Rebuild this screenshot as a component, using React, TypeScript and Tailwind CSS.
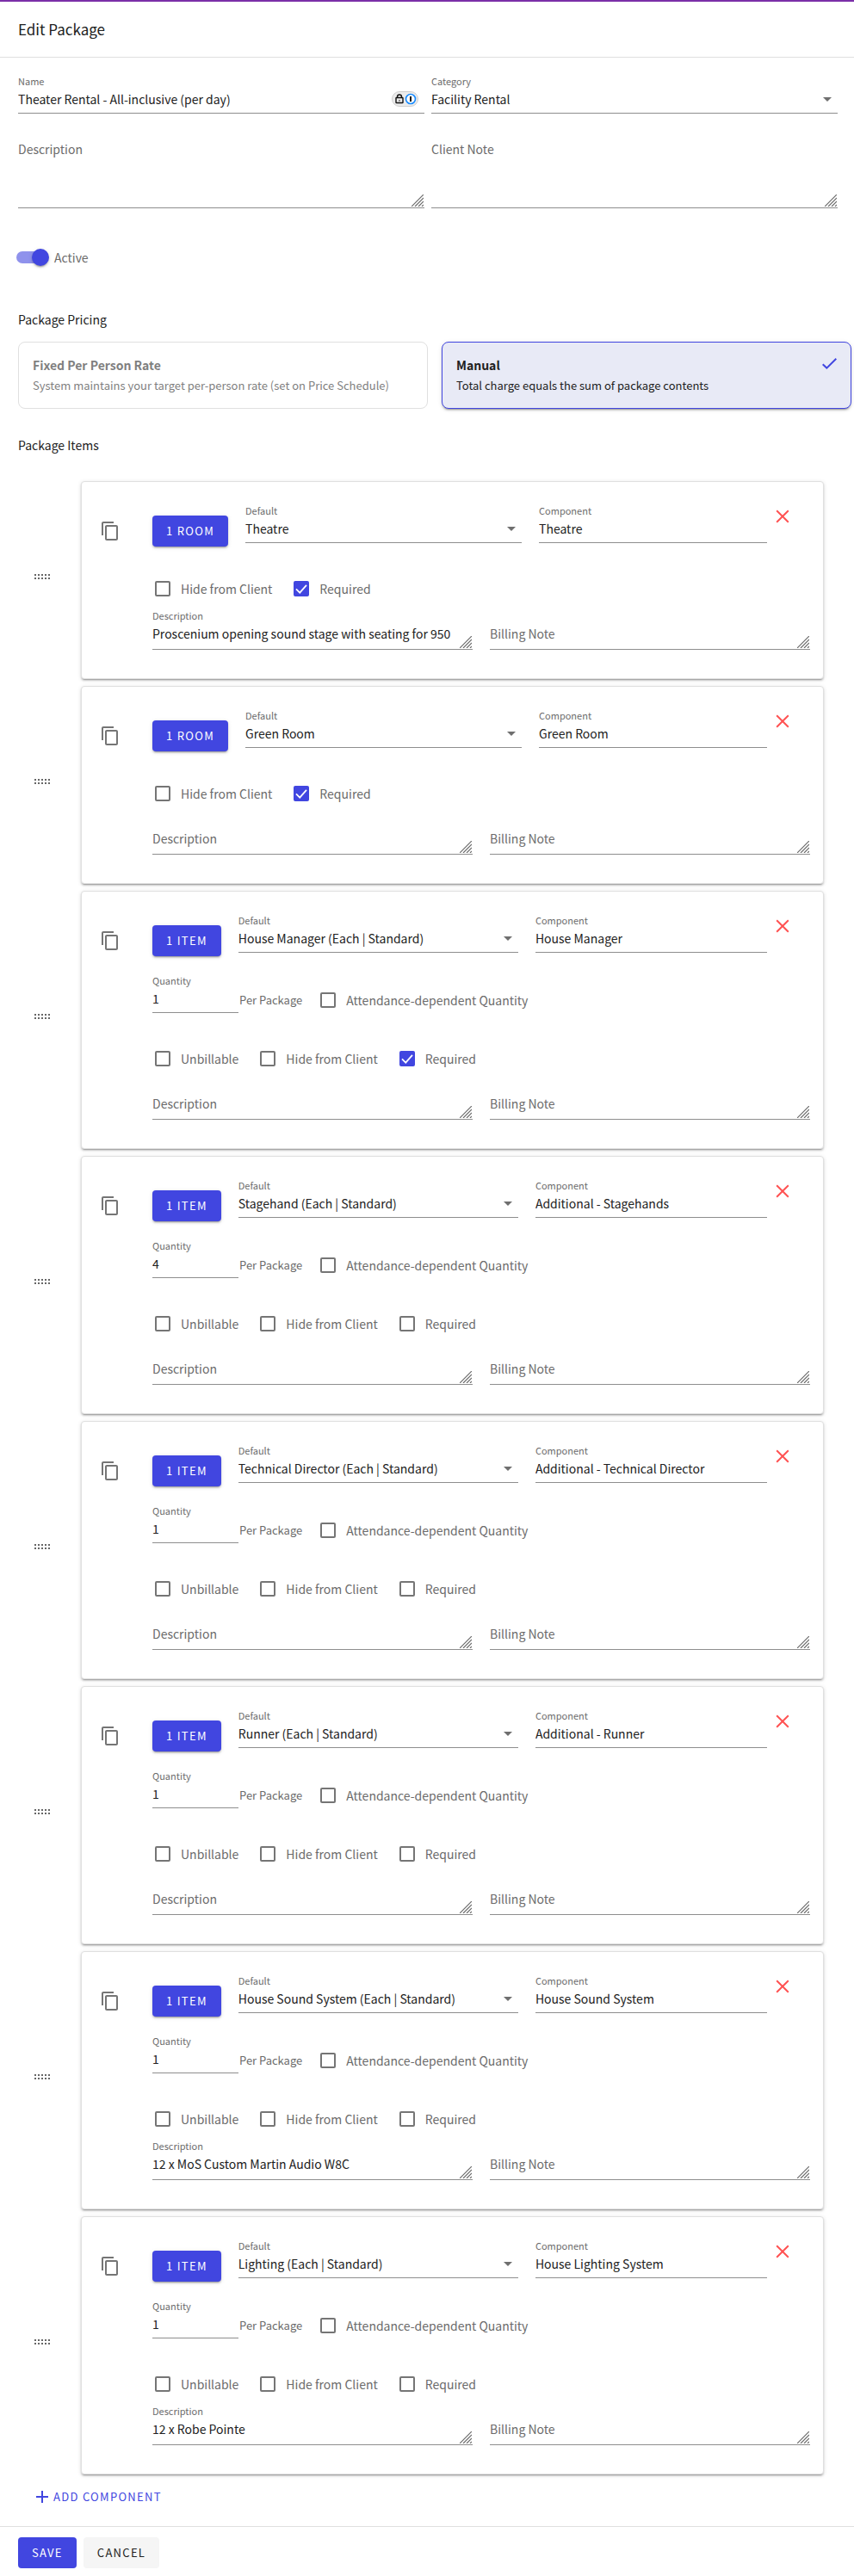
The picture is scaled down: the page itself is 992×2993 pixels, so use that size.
import { useId, type ReactNode } from "react";

type Item = {
  kind: "room" | "item";
  choice: string;
  component: string;
  quantity?: string;
  required?: boolean;
  description?: string;
};

const items: Item[] = [
  {
    kind: "room",
    choice: "Theatre",
    component: "Theatre",
    required: true,
    description: "Proscenium opening sound stage with seating for 950",
  },
  { kind: "room", choice: "Green Room", component: "Green Room", required: true },
  { kind: "item", choice: "House Manager (Each | Standard)", component: "House Manager", quantity: "1", required: true },
  { kind: "item", choice: "Stagehand (Each | Standard)", component: "Additional - Stagehands", quantity: "4" },
  { kind: "item", choice: "Technical Director (Each | Standard)", component: "Additional - Technical Director", quantity: "1" },
  { kind: "item", choice: "Runner (Each | Standard)", component: "Additional - Runner", quantity: "1" },
  {
    kind: "item",
    choice: "House Sound System (Each | Standard)",
    component: "House Sound System",
    quantity: "1",
    description: "12 x MoS Custom Martin Audio W8C",
  },
  {
    kind: "item",
    choice: "Lighting (Each | Standard)",
    component: "House Lighting System",
    quantity: "1",
    description: "12 x Robe Pointe",
  },
];

const smallLabel = "block h-4 text-[11px] leading-[15px] text-[#6b6b6b]";
const control =
  "block h-[29px] w-full min-w-0 appearance-none rounded-none border-b border-[#8e8e8e] bg-transparent p-0 pb-1 text-[14px] text-[#212121] outline-none focus:border-[#4146e0]";

function TextField({ label, value, children }: { label: string; value: string; children?: ReactNode }) {
  const id = useId();
  return (
    <div className="min-w-0">
      <label htmlFor={id} className={smallLabel}>
        {label}
      </label>
      <div className="relative">
        <input id={id} type="text" defaultValue={value} className={control} />
        {children}
      </div>
    </div>
  );
}

function SelectField({ label, value }: { label: string; value: string }) {
  const id = useId();
  return (
    <div className="min-w-0">
      <label htmlFor={id} className={smallLabel}>
        {label}
      </label>
      <div className="relative">
        <select id={id} defaultValue={value} className={control}>
          <option>{value}</option>
        </select>
        <svg viewBox="0 0 10 5" className="pointer-events-none absolute top-[10px] right-[7px] h-[5px] w-[10px]" aria-hidden="true">
          <path d="M0 0h10L5 5z" fill="#6f6f6f" />
        </svg>
      </div>
    </div>
  );
}

function AreaField({ label, value, tall }: { label: string; value?: string; tall?: boolean }) {
  const id = useId();
  const floating = value
    ? "top-0 text-[11px] leading-[15px] text-[#6b6b6b]"
    : "top-4 text-[14px] leading-6 text-[#6b6b6b]";
  return (
    <div className="relative min-w-0 pt-4">
      <label htmlFor={id} className={`pointer-events-none absolute left-0 ${floating}`}>
        {label}
      </label>
      <textarea
        id={id}
        rows={1}
        defaultValue={value}
        className={`block w-full resize-none overflow-hidden rounded-none border-b border-[#8e8e8e] bg-transparent pr-3 text-[14px] leading-6 text-[#212121] outline-none focus:border-[#4146e0] ${
          tall ? "h-[81px]" : "h-[31px]"
        }`}
      />
      <svg viewBox="0 0 14 14" className="pointer-events-none absolute right-px bottom-[2px] size-[14px]" aria-hidden="true">
        <path d="M0 14L14 0M4 14L14 4M8 14l6-6M12 14l2-2" stroke="#6b6b6b" strokeWidth="1.200" />
      </svg>
    </div>
  );
}

function Check({ label, checked }: { label: string; checked?: boolean }) {
  return (
    <label className="flex h-6 items-center gap-3 pl-[3px] text-[14px] leading-6 text-[#6b6b6b]">
      <span className="relative block size-[18px]">
        <input
          type="checkbox"
          defaultChecked={checked}
          className="peer block size-[18px] appearance-none rounded-[2px] border-2 border-[#757575] bg-white checked:border-[#4146e0] checked:bg-[#4146e0]"
        />
        <svg
          viewBox="0 0 24 24"
          className="pointer-events-none absolute inset-0 hidden size-[18px] p-[2px] peer-checked:block"
          aria-hidden="true"
        >
          <path d="M1.700 12.700L9 20 22.300 5" fill="none" stroke="#fff" strokeWidth="3" />
        </svg>
      </span>
      {label}
    </label>
  );
}

function DragHandle() {
  return (
    <button type="button" aria-label="Reorder" className="cursor-grab">
      <svg viewBox="0 0 18 6" className="block h-[6px] w-[18px]" shapeRendering="crispEdges" aria-hidden="true">
        {[0, 4, 8, 12, 16].map((x) => (
          <path key={x} d={`M${x} 0h2v2h-2zM${x} 4h2v2h-2z`} fill="#666" />
        ))}
      </svg>
    </button>
  );
}

function PackageItem({ item }: { item: Item }) {
  const isItem = item.kind === "item";
  return (
    <li className="flex items-center pt-2">
      <div className="flex w-[73px] shrink-0 justify-center pr-[17px] pb-2">
        <DragHandle />
      </div>
      <article className="flex min-w-0 flex-1 rounded-[4px] border border-[#e0e0e0] bg-white pr-[15px] pb-[33px] shadow-[0_3px_1px_-2px_rgba(0,0,0,0.2),0_2px_2px_0_rgba(0,0,0,0.14),0_1px_5px_0_rgba(0,0,0,0.12)]">
        <div className="w-[82px] shrink-0 pt-[45px] pl-[21px]">
          <button type="button" aria-label="Duplicate item" className="block">
            <svg viewBox="0 0 24 24" className="size-6" fill="#757575" aria-hidden="true">
              <path d="M16 1H4c-1.100 0-2 .9-2 2v14h2V3h12V1zm3 4H8c-1.100 0-2 .9-2 2v14c0 1.100.9 2 2 2h11c1.100 0 2-.9 2-2V7c0-1.100-.9-2-2-2zm0 16H8V7h11v14z" />
            </svg>
          </button>
        </div>
        <div className="min-w-0 flex-1">
          <div className="flex pt-[26px]">
            <button
              type="button"
              className="mt-[13px] mr-5 h-9 shrink-0 rounded-[4px] bg-[#4146e0] px-4 text-[13px] tracking-widest text-white shadow-[0_3px_1px_-2px_rgba(0,0,0,0.2),0_2px_2px_0_rgba(0,0,0,0.14),0_1px_5px_0_rgba(0,0,0,0.12)]"
            >
              {isItem ? "1 ITEM" : "1 ROOM"}
            </button>
            <div className="mr-5 min-w-0 grow basis-64">
              <SelectField label="Default" value={item.choice} />
            </div>
            <div className="min-w-0 grow basis-[200px]">
              <TextField label="Component" value={item.component} />
            </div>
            <button type="button" aria-label="Remove item" className="mt-[2px] mr-5 ml-[6px] size-6 shrink-0">
              <svg viewBox="0 0 24 24" className="size-6" aria-hidden="true">
                <path d="M5.200 5.200l13.600 13.600M18.800 5.200l-13.600 13.600" stroke="#ff5252" strokeWidth="2" />
              </svg>
            </button>
          </div>
          {isItem && (
            <div className="flex pt-[21px]">
              <div className="w-[100px]">
                <TextField label="Quantity" value={item.quantity ?? ""} />
              </div>
              <span className="mr-[18px] pt-[18px] pl-px text-[13px] leading-6 text-[#6b6b6b]">Per Package</span>
              <div className="pt-[18px]">
                <Check label="Attendance-dependent Quantity" />
              </div>
            </div>
          )}
          <div className={`flex flex-wrap gap-[22px] pb-3 ${isItem ? "pt-[41px]" : "pt-[37px]"}`}>
            {isItem && <Check label="Unbillable" />}
            <Check label="Hide from Client" />
            <Check label="Required" checked={item.required} />
          </div>
          <div className="grid grid-cols-2 gap-5">
            <AreaField label="Description" value={item.description} />
            <AreaField label="Billing Note" />
          </div>
        </div>
      </article>
    </li>
  );
}

export default function App() {
  return (
    <main className="min-h-screen border-t-2 border-[#7b2fa8] bg-white font-['Noto_Sans_CJK_SC',sans-serif] text-[14px] text-[#212121]">
      <header className="flex h-[65px] items-center border-b border-[#e0e0e0] px-[21px]">
        <h1 className="text-[17px] leading-7">Edit Package</h1>
      </header>

      <form>
        <div className="pt-5 pr-[19px] pl-[21px]">
          <div className="grid grid-cols-2 gap-x-2 gap-y-[13px]">
            <TextField label="Name" value="Theater Rental - All-inclusive (per day)">
              <svg viewBox="0 0 31 18" className="pointer-events-none absolute top-[3px] right-[7px] h-[18px] w-[31px]" aria-hidden="true">
                <rect x=".5" y=".5" width="30" height="17" rx="8.500" fill="#ececec" stroke="#cfcfcf" />
                <rect x="5" y="7.500" width="8" height="6" rx=".6" fill="none" stroke="#111" strokeWidth="1.400" />
                <path d="M6.500 8V6.500a2.500 2.500 0 0 1 5 0V8" fill="none" stroke="#111" strokeWidth="1.400" />
                <rect x="8.500" y="10" width="1" height="1.600" fill="#111" />
                <circle cx="22" cy="9" r="5.500" fill="#fff" stroke="#1a8cff" strokeWidth="1.700" />
                <rect x="21" y="6" width="2" height="6" fill="#111" />
              </svg>
            </TextField>
            <SelectField label="Category" value="Facility Rental" />
            <AreaField label="Description" tall />
            <AreaField label="Client Note" tall />
          </div>

          <label className="mt-[47px] -ml-[2px] flex h-5 w-fit items-center gap-[6px] leading-6 text-[#6b6b6b]">
            <span className="relative flex h-5 w-[38px] items-center">
              <input
                type="checkbox"
                role="switch"
                defaultChecked
                className="peer h-[14px] w-8 appearance-none rounded-full bg-[#bdbdbd] checked:bg-[#8f92ec]"
              />
              <span className="pointer-events-none absolute top-0 left-0 size-5 rounded-full bg-white shadow-[0_3px_1px_-2px_rgba(0,0,0,0.2),0_2px_2px_0_rgba(0,0,0,0.14),0_1px_5px_0_rgba(0,0,0,0.12)] peer-checked:left-[18px] peer-checked:bg-[#4146e0]" />
            </span>
            Active
          </label>
        </div>

        <section className="pt-[50px] pr-[3px] pl-[21px]">
          <h2 className="leading-6">Package Pricing</h2>
          <div className="mt-[14px] grid grid-cols-2 gap-4">
            <button type="button" className="h-[78px] rounded-[8px] border border-[#e0e0e0] px-4 text-left text-[#7f7f7f]">
              <span className="block text-[14px] leading-6 font-semibold">Fixed Per Person Rate</span>
              <span className="block text-[13px] leading-6">System maintains your target per-person rate (set on Price Schedule)</span>
            </button>
            <button
              type="button"
              aria-pressed="true"
              className="flex h-[78px] items-center justify-between rounded-[8px] border border-[#4146e0] bg-[#e8eaf6] px-4 text-left shadow-[0_3px_1px_-2px_rgba(0,0,0,0.2),0_2px_2px_0_rgba(0,0,0,0.14),0_1px_5px_0_rgba(0,0,0,0.12)]"
            >
              <span>
                <span className="block text-[14px] leading-6 font-semibold">Manual</span>
                <span className="block text-[13px] leading-6">Total charge equals the sum of package contents</span>
              </span>
              <svg viewBox="0 0 17 13" className="mb-[27px] h-[13px] w-[17px]" aria-hidden="true">
                <path d="M.7 7.300l4.600 4.300L16.300 .8" fill="none" stroke="#4146e0" strokeWidth="2" />
              </svg>
            </button>
          </div>
        </section>

        <section className="pt-[30px] pl-[21px]">
          <h2 className="leading-6">Package Items</h2>
          <ul className="mt-[22px] pr-[35px]">
            {items.map((item) => (
              <PackageItem key={item.component} item={item} />
            ))}
          </ul>
          <button type="button" className="mt-2 ml-[21px] flex h-9 items-center gap-[6px] text-[13px] tracking-widest text-[#4146e0]">
            <svg viewBox="0 0 14 14" className="size-[14px]" aria-hidden="true">
              <path d="M7 0v14M0 7h14" stroke="#4146e0" strokeWidth="2" />
            </svg>
            ADD COMPONENT
          </button>
        </section>

        <footer className="mt-4 flex gap-2 border-t border-[#e0e0e0] px-[21px] pt-3 pb-[9px] text-[13px] tracking-widest">
          <button type="submit" className="h-9 rounded-[4px] bg-[#4146e0] px-4 text-white">
            SAVE
          </button>
          <button type="button" className="h-9 rounded-[4px] bg-[#f5f5f5] px-4">
            CANCEL
          </button>
        </footer>
      </form>
    </main>
  );
}
